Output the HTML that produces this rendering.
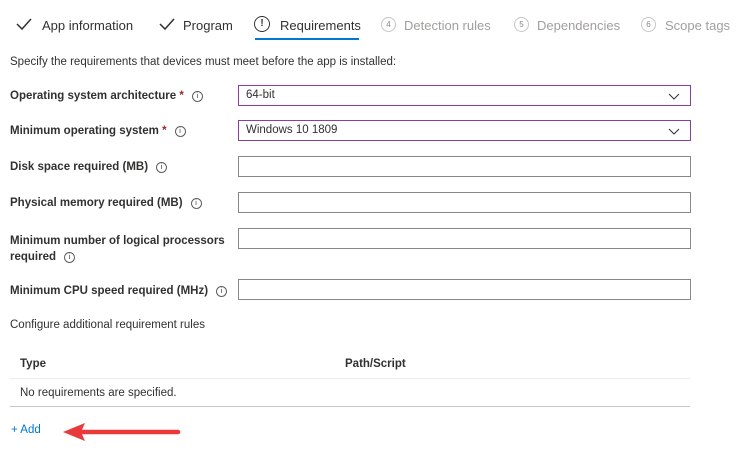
<!DOCTYPE html>
<html><head><style>
body{margin:0;width:740px;height:469px;background:#fff;font-family:"Liberation Sans",sans-serif;color:#323130;position:relative;overflow:hidden}
.a{position:absolute;white-space:nowrap}
.tab{font-size:13px;top:18px}
.g{color:#a19f9d}
.num{position:absolute;top:17px;width:13px;height:13px;border:1px solid #c8c6c4;border-radius:50%;font-size:8px;text-align:center;line-height:13px;color:#8a8886}
.lbl{font-size:11.5px;font-weight:bold;color:#323130}
.inp{position:absolute;left:238px;width:453px;height:21px;border:1px solid #8a8886;font-size:11.5px;line-height:19px;padding-left:7px;box-sizing:border-box}
.sel{border-color:#8a3fa0}
.info{display:inline-block;width:9px;height:9px;border:1px solid #605e5c;border-radius:50%;font-size:7px;line-height:9px;text-align:center;font-weight:normal;margin-left:8px;vertical-align:1px}
.chev{position:absolute;right:10px;top:4px}
</style></head><body>
<svg class="a" style="left:15px;top:17px" width="18" height="14"><path d="M2 7 L7 12 L16 2" stroke="#323130" stroke-width="1.5" fill="none"/></svg>
<div class="a tab" style="left:42px">App information</div>
<svg class="a" style="left:158px;top:17px" width="18" height="14"><path d="M2 7 L7 12 L16 2" stroke="#323130" stroke-width="1.5" fill="none"/></svg>
<div class="a tab" style="left:183px">Program</div>
<div class="a" style="left:254px;top:16px;width:14px;height:14px;border:1.3px solid #323130;border-radius:50%;font-size:10px;text-align:center;line-height:14px;font-weight:bold">!</div>
<div class="a tab" style="left:280px">Requirements</div>
<div class="a" style="left:255px;top:38px;width:104px;height:2px;background:#0078d4"></div>
<div class="num" style="left:381px">4</div><div class="a tab g" style="left:404px">Detection rules</div>
<div class="num" style="left:514px">5</div><div class="a tab g" style="left:537px">Dependencies</div>
<div class="num" style="left:641px">6</div><div class="a tab g" style="left:665px">Scope tags</div>
<div class="a" style="left:10px;top:56px;font-size:11.5px">Specify the requirements that devices must meet before the app is installed:</div>

<div class="a lbl" style="left:10px;top:90px">Operating system architecture <span style="color:#a4262c">*</span><span class="info">i</span></div>
<div class="inp sel" style="top:85px">64-bit<svg class="chev" width="12" height="12"><path d="M1 4 L6 9 L11 4" stroke="#323130" fill="none"/></svg></div>
<div class="a lbl" style="left:10px;top:125px">Minimum operating system <span style="color:#a4262c">*</span><span class="info">i</span></div>
<div class="inp sel" style="top:120px">Windows 10 1809<svg class="chev" width="12" height="12"><path d="M1 4 L6 9 L11 4" stroke="#323130" fill="none"/></svg></div>
<div class="a lbl" style="left:10px;top:161px">Disk space required (MB)<span class="info">i</span></div>
<div class="inp" style="top:156px"></div>
<div class="a lbl" style="left:10px;top:197px">Physical memory required (MB)<span class="info">i</span></div>
<div class="inp" style="top:192px"></div>
<div class="a lbl" style="left:10px;top:233px;line-height:16px">Minimum number of logical processors<br>required<span class="info">i</span></div>
<div class="inp" style="top:228px"></div>
<div class="a lbl" style="left:10px;top:285px">Minimum CPU speed required (MHz)<span class="info">i</span></div>
<div class="inp" style="top:279px"></div>

<div class="a" style="left:10px;top:319px;font-size:11.5px">Configure additional requirement rules</div>
<div class="a" style="left:20px;top:358px;font-size:11.5px;font-weight:bold">Type</div>
<div class="a" style="left:345px;top:358px;font-size:11.5px;font-weight:bold">Path/Script</div>
<div class="a" style="left:10px;top:378px;width:680px;height:1px;background:#edebe9"></div>
<div class="a" style="left:20px;top:387px;font-size:11.5px">No requirements are specified.</div>
<div class="a" style="left:10px;top:406px;width:680px;height:1px;background:#c8c6c4"></div>
<div class="a" style="left:11px;top:424px;font-size:11.5px;color:#0078d4">+ Add</div>
<svg class="a" style="left:60px;top:420px" width="125" height="24"><path d="M118 12 L20 12" stroke="#e83a3a" stroke-width="4.5" stroke-linecap="round"/><path d="M3 12 L25 3 L21 12 L25 21 Z" fill="#e83a3a"/></svg>
</body></html>
